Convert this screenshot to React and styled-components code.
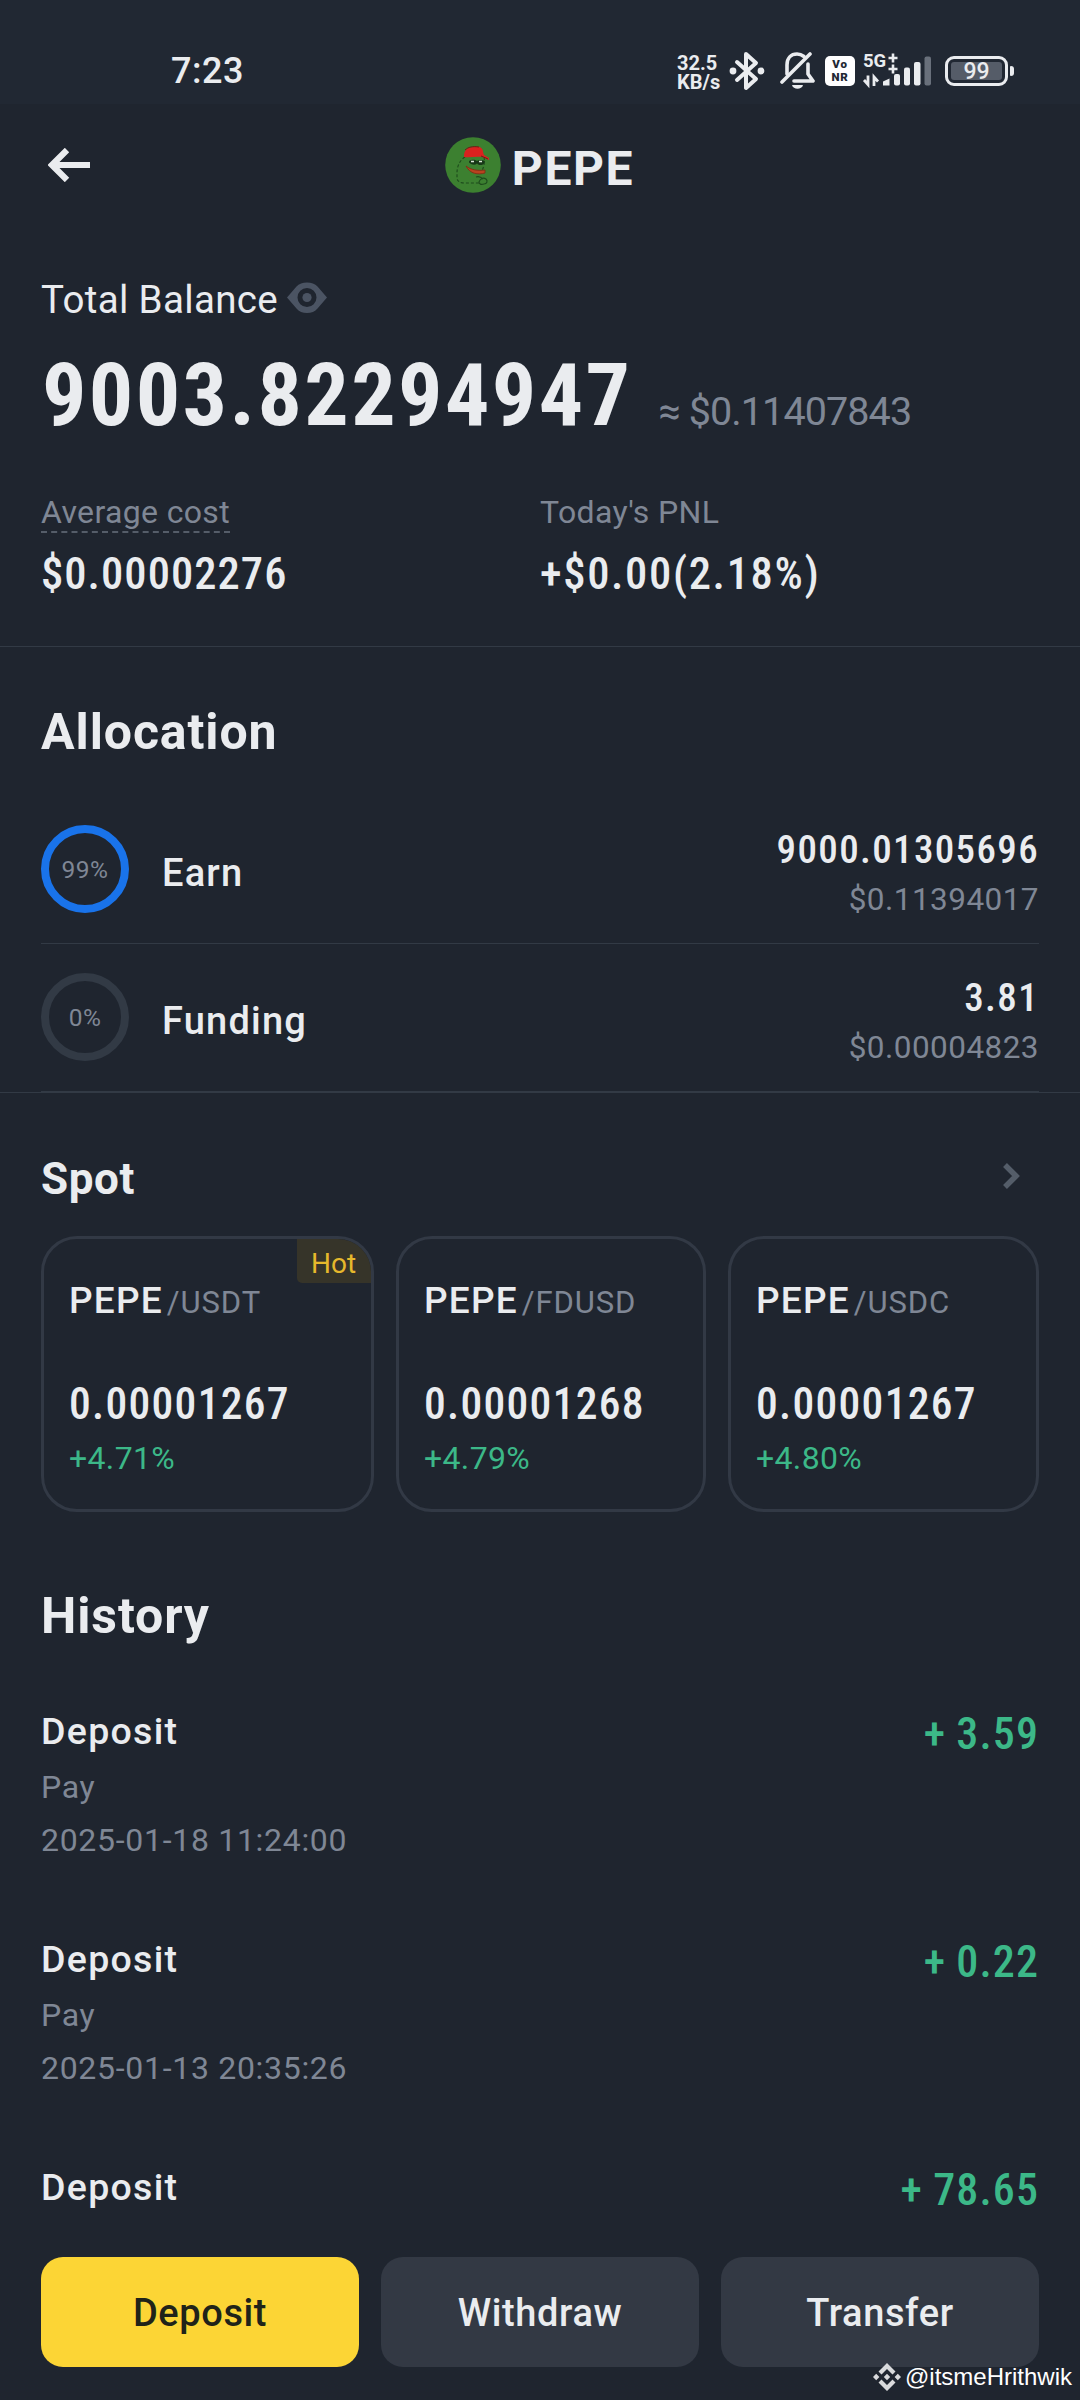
import React from 'react';
import styled, { createGlobalStyle, css } from 'styled-components';

const GlobalStyle = createGlobalStyle`
	* {
		box-sizing: border-box;
	}
	body {
		margin: 0;
		background: #1f252f;
		color: #eaecef;
		font-family: Roboto, 'Liberation Sans', sans-serif;
	}
`;

// narrow figures used for the main amounts
const figures = css`
	font-stretch: 75%;
`;

const holdings = [
	{ name: 'Earn', percent: 99, amount: '9000.01305696', value: '$0.11394017' },
	{ name: 'Funding', percent: 0, amount: '3.81', value: '$0.00004823' },
];

const pairs = [
	{ quote: '/USDT', price: '0.00001267', change: '+4.71%', hot: true },
	{ quote: '/FDUSD', price: '0.00001268', change: '+4.79%' },
	{ quote: '/USDC', price: '0.00001267', change: '+4.80%' },
];

const history = [
	{ type: 'Deposit', amount: '+ 3.59', via: 'Pay', date: '2025-01-18 11:24:00' },
	{ type: 'Deposit', amount: '+ 0.22', via: 'Pay', date: '2025-01-13 20:35:26' },
	{ type: 'Deposit', amount: '+ 78.65' },
];

const Screen = styled.div`
	position: relative;
	display: flex;
	flex-direction: column;
	width: 1080px;
	height: 2400px;
	overflow: hidden;
	background: #1f252f;
`;

/* Status bar */

const StatusBar = styled.div`
	display: flex;
	flex: none;
	align-items: center;
	justify-content: space-between;
	height: 104px;
	padding: 37px 66px 0 171px;
	background: #212833;
`;

const Time = styled.div`
	font-size: 36px;
	font-weight: 500;
	line-height: 40px;
	letter-spacing: 0.5px;
`;

const StatusIcons = styled.div`
	display: flex;
	align-items: center;
`;

const Speed = styled.div`
	width: 41px;
	margin-right: 11px;
	padding-top: 5px;
	font-size: 20px;
	font-weight: 700;
	line-height: 19px;
	white-space: nowrap;
`;

const VoNr = styled.div`
	display: flex;
	flex-direction: column;
	justify-content: center;
	width: 30px;
	height: 30px;
	margin: 0 8px 0 10px;
	border-radius: 5px;
	background: #fff;
	color: #212833;
	font-size: 11.5px;
	font-weight: 900;
	line-height: 13px;
	letter-spacing: 0.8px;
	text-align: center;
`;

const Signal = styled.div`
	position: relative;
	width: 68px;
	height: 32px;
	margin-right: 14px;
`;

const SignalLabel = styled.span`
	position: absolute;
	top: -3px;
	left: 0;
	font-size: 18.5px;
	font-weight: 700;
	line-height: 18px;
`;

const Battery = styled.div`
	display: flex;
	align-items: center;
	gap: 2px;
	&::after {
		content: '';
		width: 4px;
		height: 10px;
		border-radius: 1px 3px 3px 1px;
		background: #eaecef;
	}
`;

const BatteryBody = styled.div`
	width: 63px;
	height: 30px;
	padding: 3px;
	border: 3px solid #eaecef;
	border-radius: 9px;
`;

const BatteryLevel = styled.div`
	height: 18px;
	border-radius: 3px;
	background: #555c68;
	font-size: 23px;
	font-weight: 500;
	line-height: 19px;
	text-align: center;
`;

/* Header */

const Header = styled.header`
	display: grid;
	flex: none;
	grid-template-columns: 1fr auto 1fr;
	align-items: center;
	height: 121px;
	padding: 0 48px;
`;

const CoinTitle = styled.div`
	display: flex;
	align-items: center;
	gap: 11px;
	padding-right: 1px;
`;

const CoinName = styled.h1`
	margin: 0;
	padding-top: 9px;
	font-size: 48px;
	font-weight: 700;
	line-height: 48px;
	letter-spacing: 1.6px;
`;

/* Shared parts */

const Section = styled.section`
	flex: none;
	padding: ${(p) => p.$padding};
	border-bottom: ${(p) => (p.$divided ? '1px solid #323a45' : 'none')};
`;

const Heading = styled.h2`
	margin: 0;
	font-size: ${(p) => (p.$small ? 44 : 50)}px;
	font-weight: 700;
	line-height: ${(p) => (p.$small ? 52 : 58)}px;
	letter-spacing: ${(p) => (p.$small ? 0.6 : 0.9)}px;
`;

/* Balance */

const BalanceLabel = styled.div`
	display: flex;
	align-items: center;
	gap: 9px;
	font-size: 38.5px;
	line-height: 46px;
	letter-spacing: 0.35px;
	svg {
		margin-bottom: 6px;
	}
`;

const BalanceRow = styled.div`
	display: flex;
	align-items: baseline;
	gap: 26px;
	height: 88px;
	margin-top: 28px;
	line-height: 88px;
	white-space: nowrap;
`;

const Balance = styled.span`
	${figures}
	padding-left: 1px;
	font-size: 88px;
	font-weight: 700;
	letter-spacing: 2.4px;
`;

const BalanceFiat = styled.span`
	color: #7f8795;
	font-size: 39.5px;
	letter-spacing: -0.9px;
`;

const Stats = styled.div`
	display: grid;
	grid-template-columns: 1fr 1fr;
	margin-top: 54px;
`;

const StatLabel = styled.span`
	display: inline-block;
	border-bottom: 2px dashed ${(p) => (p.$hint ? '#555d69' : 'transparent')};
	color: #7f8795;
	font-size: 32px;
	line-height: 38px;
	letter-spacing: 0.35px;
	vertical-align: top;
`;

const StatValue = styled.div`
	${figures}
	margin-top: 15px;
	font-size: 44.5px;
	font-weight: 500;
	line-height: 52px;
	letter-spacing: ${(p) => (p.$wide ? 1.65 : 1.05)}px;
`;

/* Allocation */

const HoldingList = styled.div`
	margin-top: 35px;
`;

const Holding = styled.div`
	display: flex;
	align-items: center;
	height: 148px;
	border-bottom: 1px solid #323a45;
`;

const Ring = styled.div`
	display: grid;
	place-items: center;
	width: 88px;
	height: 88px;
	margin-bottom: 2px;
	padding-top: 2px;
	border: 8px solid ${(p) => (p.$active ? '#1973ea' : '#323a45')};
	border-radius: 50%;
	color: #7f8795;
	font-size: 24.5px;
	line-height: 28px;
	letter-spacing: 0.5px;
`;

const HoldingName = styled.div`
	flex: 1;
	padding: 6px 0 0 33px;
	font-size: 38px;
	font-weight: 500;
	line-height: 44px;
	letter-spacing: 1.2px;
`;

const HoldingTotals = styled.div`
	display: flex;
	flex-direction: column;
	gap: 7px;
	padding-top: 7px;
	text-align: right;
`;

const HoldingAmount = styled.div`
	${figures}
	font-size: 39px;
	font-weight: 500;
	line-height: 46px;
	letter-spacing: 1.35px;
`;

const HoldingValue = styled.div`
	color: #7f8795;
	font-size: 31.5px;
	line-height: 40px;
	letter-spacing: 0.45px;
`;

/* Spot */

const SpotTitle = styled.div`
	display: flex;
	align-items: center;
	justify-content: space-between;
	padding-right: 18px;
	svg {
		margin-bottom: 7px;
	}
`;

const Pairs = styled.div`
	display: grid;
	grid-template-columns: 333px 310px 311px;
	gap: 22px;
	margin-top: 31px;
`;

const PairCard = styled.div`
	position: relative;
	height: 276px;
	padding: 40px 0 0 25px;
	overflow: hidden;
	border: 3px solid #323945;
	border-radius: 36px;
`;

const PairName = styled.div`
	display: flex;
	align-items: baseline;
	gap: 4px;
	font-size: 37px;
	font-weight: 500;
	line-height: 44px;
	letter-spacing: 1.2px;
`;

const Quote = styled.span`
	color: #7f8795;
	font-size: 31px;
	font-weight: 400;
	letter-spacing: 0.9px;
`;

const Price = styled.div`
	${figures}
	margin-top: 54px;
	font-size: 43.5px;
	font-weight: 500;
	line-height: 52px;
	letter-spacing: 1.3px;
`;

const Change = styled.div`
	margin-top: 8px;
	color: #3cb888;
	font-size: 32px;
	line-height: 38px;
	letter-spacing: 0.35px;
`;

const HotTag = styled.span`
	position: absolute;
	top: 0;
	right: 0;
	width: 74px;
	height: 44px;
	padding-left: 14px;
	border-radius: 0 0 0 5px;
	background: #363429;
	color: #e6b82c;
	font-size: 28px;
	line-height: 49px;
`;

/* History */

const HistoryList = styled.div`
	display: flex;
	flex-direction: column;
	gap: 77px;
	margin-top: 63px;
`;

const Entry = styled.div`
	display: flex;
	justify-content: space-between;
`;

const EntryType = styled.div`
	font-size: 37.5px;
	font-weight: 500;
	line-height: 46px;
	letter-spacing: 1.3px;
`;

const EntryMeta = styled.div`
	margin-top: ${(p) => p.$top}px;
	color: #7f8795;
	font-size: 32px;
	line-height: 38px;
	letter-spacing: 0.7px;
`;

const EntryAmount = styled.div`
	${figures}
	padding-top: 3px;
	color: #3cb888;
	font-size: 44px;
	font-weight: 500;
	line-height: 46px;
	letter-spacing: 1.1px;
	word-spacing: -1px;
`;

/* Footer */

const Footer = styled.footer`
	display: grid;
	flex: none;
	grid-template-columns: repeat(3, 1fr);
	gap: 22px;
	margin-top: auto;
	padding: 30px 41px 33px;
	background: #1f252f;
`;

const ActionButton = styled.button`
	height: 110px;
	padding: 2px 0 0;
	border: 0;
	border-radius: 22px;
	background: ${(p) => (p.$primary ? '#fcd535' : '#333944')};
	color: ${(p) => (p.$primary ? '#202319' : '#eaecef')};
	font-family: inherit;
	font-size: 38px;
	font-weight: 500;
	letter-spacing: 0.6px;
`;

const Watermark = styled.div`
	position: absolute;
	right: 8px;
	bottom: 9px;
	display: flex;
	align-items: center;
	gap: 4px;
	color: #fff;
	font-family: 'Liberation Sans', Arial, sans-serif;
	font-size: 24px;
	line-height: 29px;
`;

const BluetoothIcon = () => (
	<svg width="36" height="40" viewBox="0 0 36 40" fill="none" stroke="#eaecef" strokeWidth="4" strokeLinejoin="round" strokeLinecap="round">
		<path d="M8 11 27 28 17 37V3l10 9L8 29" />
		<circle cx="4" cy="20" r="3.4" fill="#eaecef" stroke="none" />
		<circle cx="32" cy="20" r="3.4" fill="#eaecef" stroke="none" />
	</svg>
);

const MutedBell = styled.svg`
	margin-left: 15px;
`;

const BellIcon = () => (
	<MutedBell width="35" height="39" viewBox="0 0 35 39" fill="none" stroke="#eaecef" strokeWidth="3.6" strokeLinecap="round" strokeLinejoin="round">
		<path d="M7 23V14C7 7 11 3 17 3c3 0 5 1 7 2.500" />
		<path d="M28 13v10l5 7H14" />
		<path d="M2 31 30 3" />
		<path d="M12 34h11c-1 5-10 5-11 0z" fill="#eaecef" stroke="none" />
	</MutedBell>
);

const SignalArt = styled.svg`
	display: block;
	overflow: visible;
`;

const SignalIcon = () => (
	<SignalArt width="68" height="32" viewBox="0 0 68 32" fill="#eaecef">
		<path d="M25.500 3h9M30 -1.500v9M25.500 14h9M30 9.500v9" stroke="#eaecef" strokeWidth="2.600" />
		<path d="M5 20.500v9L1 25M11 31v-9l4 4.500" fill="none" stroke="#eaecef" strokeWidth="2.800" />
		<path d="M20 30.500v-4l6.500-3v7z" />
		<rect x="31" y="19" width="6" height="11.500" rx="2" />
		<rect x="41" y="12.500" width="6" height="18" rx="2" />
		<rect x="51" y="7" width="6.500" height="23.500" rx="2" />
		<rect x="61.500" y="1.500" width="6.500" height="29" rx="2" fill="#69707b" />
	</SignalArt>
);

const BackIcon = () => (
	<svg width="42" height="34" viewBox="0 0 42 34" fill="none" stroke="#eaecef" strokeWidth="6.200">
		<path d="M42 17H6M19 2 4 17l15 15" />
	</svg>
);

const PepeLogo = () => (
	<svg width="56" height="56" viewBox="0 0 56 56">
		<circle cx="28" cy="28" r="27.800" fill="#3c8030" />
		<path d="M20 20c-5 3-8 9-8 16v5c0 3 3 5 7 5h17M39 20c1 5 0 9-2 14" fill="none" stroke="#1d4a1c" strokeWidth="1.100" strokeDasharray="3 2" />
		<path d="M19 19c0-6 4-9 10-9 6-1 9 1 9 5l1 3 5 3v2l-7-3c-6-1-12 1-18 0z" fill="#d9221f" />
		<path d="M20 13c3-3 8-4 14-3M36 19l7 3" fill="none" stroke="#6d1c14" strokeWidth="1" />
		<path d="M24 24c3-2 6-1.500 8 0 2-1.500 5-1.500 8 0l-1 2.500c-2 2-5 2-7 0-2 2-5 1.500-8-1z" fill="#183818" />
		<path d="M26 24.500h3M34 24.500h3" stroke="#dce8d8" strokeWidth="1.700" />
		<path d="M21 29c5 4 12 5 19 4v3c-7 2-15 1-19-7z" fill="#b8431f" stroke="#7c2b13" strokeWidth="0.800" />
		<path d="M31 40c3-1 5 0 7 2M34 45c1-3 4-5 7-3 2 2 1 5-2 5-3 1-5 0-5-2z" fill="none" stroke="#1d4a1c" strokeWidth="1.100" />
	</svg>
);

const EyeIcon = () => (
	<svg width="40" height="31" viewBox="0 0 40 31">
		<path
			fill="#4b5463"
			fillRule="evenodd"
			d="M0 15.500 9.500 4.500C14-1 26-1 30.500 4.500L40 15.500l-9.500 11c-4.500 6-16.500 6-21 0zM20 6a9.500 9.500 0 1 0 0 19 9.500 9.500 0 0 0 0-19z"
		/>
		<circle cx="20" cy="15.500" r="4.600" fill="#4b5463" />
	</svg>
);

const ChevronIcon = () => (
	<svg width="18" height="26" viewBox="0 0 18 26" fill="none" stroke="#545d69" strokeWidth="5.500">
		<path d="M2 2 13 13 2 24" />
	</svg>
);

const BinanceIcon = () => (
	<svg width="28" height="28" viewBox="0 0 28 28" fill="#d9dadc">
		<path d="M14 0l8.500 8.500-3 3L14 6l-5.500 5.500-3-3z" />
		<path d="M14 28l8.500-8.500-3-3L14 22l-5.500-5.500-3 3z" />
		<path d="M14 10.800 17.200 14 14 17.200 10.800 14zM3.200 10.800 6.400 14l-3.200 3.200L0 14zM24.800 10.800 28 14l-3.200 3.200-3.200-3.200z" />
	</svg>
);

const App = () => {
	return (
		<Screen>
			<GlobalStyle />
			<StatusBar>
				<Time>7:23</Time>
				<StatusIcons>
					<Speed>
						32.5
						<br />
						KB/s
					</Speed>
					<BluetoothIcon />
					<BellIcon />
					<VoNr>
						<span>Vo</span>
						<span>NR</span>
					</VoNr>
					<Signal>
						<SignalLabel>5G</SignalLabel>
						<SignalIcon />
					</Signal>
					<Battery>
						<BatteryBody>
							<BatteryLevel>99</BatteryLevel>
						</BatteryBody>
					</Battery>
				</StatusIcons>
			</StatusBar>

			<Header>
				<BackIcon />
				<CoinTitle>
					<PepeLogo />
					<CoinName>PEPE</CoinName>
				</CoinTitle>
			</Header>

			<Section $padding="52px 41px 46px" $divided>
				<BalanceLabel>
					Total Balance
					<EyeIcon />
				</BalanceLabel>
				<BalanceRow>
					<Balance>9003.82294947</Balance>
					<BalanceFiat>≈ $0.11407843</BalanceFiat>
				</BalanceRow>
				<Stats>
					<div>
						<StatLabel $hint>Average cost</StatLabel>
						<StatValue>$0.00002276</StatValue>
					</div>
					<div>
						<StatLabel>Today's PNL</StatLabel>
						<StatValue $wide>+$0.00(2.18%)</StatValue>
					</div>
				</Stats>
			</Section>

			<Section $padding="56px 41px 0" $divided>
				<Heading>Allocation</Heading>
				<HoldingList>
					{holdings.map((item) => (
						<Holding key={item.name}>
							<Ring $active={item.percent > 0}>{item.percent}%</Ring>
							<HoldingName>{item.name}</HoldingName>
							<HoldingTotals>
								<HoldingAmount>{item.amount}</HoldingAmount>
								<HoldingValue>{item.value}</HoldingValue>
							</HoldingTotals>
						</Holding>
					))}
				</HoldingList>
			</Section>

			<Section $padding="60px 41px 0">
				<SpotTitle>
					<Heading $small>Spot</Heading>
					<ChevronIcon />
				</SpotTitle>
				<Pairs>
					{pairs.map((pair) => (
						<PairCard key={pair.quote}>
							{pair.hot && <HotTag>Hot</HotTag>}
							<PairName>
								PEPE<Quote>{pair.quote}</Quote>
							</PairName>
							<Price>{pair.price}</Price>
							<Change>{pair.change}</Change>
						</PairCard>
					))}
				</Pairs>
			</Section>

			<Section $padding="75px 41px 0">
				<Heading>History</Heading>
				<HistoryList>
					{history.map((entry) => (
						<Entry key={entry.amount}>
							<div>
								<EntryType>{entry.type}</EntryType>
								{entry.via && <EntryMeta $top={14}>{entry.via}</EntryMeta>}
								{entry.date && <EntryMeta $top={15}>{entry.date}</EntryMeta>}
							</div>
							<EntryAmount>{entry.amount}</EntryAmount>
						</Entry>
					))}
				</HistoryList>
			</Section>

			<Footer>
				<ActionButton $primary>Deposit</ActionButton>
				<ActionButton>Withdraw</ActionButton>
				<ActionButton>Transfer</ActionButton>
			</Footer>

			<Watermark>
				<BinanceIcon />
				@itsmeHrithwik
			</Watermark>
		</Screen>
	);
};

export default App;
